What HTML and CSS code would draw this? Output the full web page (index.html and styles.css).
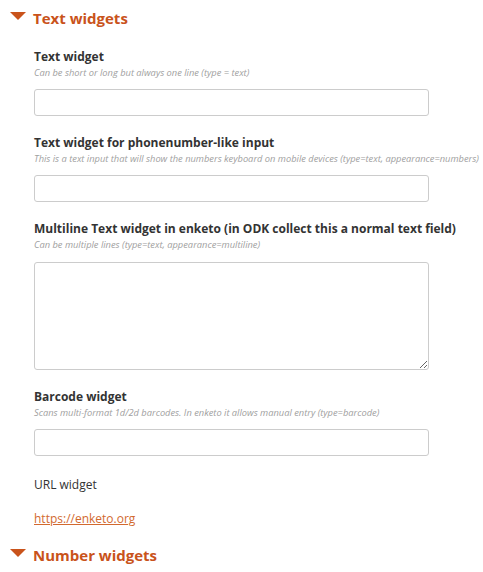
FILE: index.html
```html
<!DOCTYPE html>
<html lang="en">
<head>
<meta charset="utf-8">
<title>Widgets</title>
<link rel="stylesheet" href="styles.css">
</head>
<body>
<main class="form">
  <section class="group">
    <h4 class="group-title"><span class="caret"></span>Text widgets</h4>
    <label class="question">
      <span class="q-label">Text widget</span>
      <span class="hint">Can be short or long but always one line (type = text)</span>
      <input class="field" type="text">
    </label>
    <label class="question">
      <span class="q-label">Text widget for phonenumber-like input</span>
      <span class="hint">This is a text input that will show the numbers keyboard on mobile devices (type=text, appearance=numbers)</span>
      <input class="field" type="text">
    </label>
    <label class="question">
      <span class="q-label">Multiline Text widget in enketo (in ODK collect this a normal text field)</span>
      <span class="hint">Can be multiple lines (type=text, appearance=multiline)</span>
      <textarea class="field area"></textarea>
    </label>
    <label class="question">
      <span class="q-label">Barcode widget</span>
      <span class="hint">Scans multi-format 1d/2d barcodes. In enketo it allows manual entry (type=barcode)</span>
      <input class="field" type="text">
    </label>
    <div class="question note">
      <span class="note-label">URL widget</span>
      <a class="link" href="#">https://enketo.org</a>
    </div>
  </section>
  <section class="group">
    <h4 class="group-title"><span class="caret"></span>Number widgets</h4>
  </section>
</main>
</body>
</html>
```

FILE: styles.css
```css
html, body {
  margin: 0;
  padding: 0;
  background: #fff;
}
body {
  font-family: "Open Sans", "DejaVu Sans", sans-serif;
  color: #333;
}
.form {
  padding: 8px 0 0 0;
}
.group-title {
  margin: 0;
  display: flex;
  align-items: center;
  font-size: 15px;
  line-height: 20px;
  font-weight: 700;
  color: #c9531b;
}
.caret {
  width: 0;
  height: 0;
  margin: 0 7px 0 10px;
  border-left: 8.5px solid transparent;
  border-right: 8.5px solid transparent;
  border-top: 8px solid #c9531b;
  position: relative;
  top: -2px;
}
.question {
  display: flex;
  flex-direction: column;
  align-items: flex-start;
  padding-left: 34px;
  margin-top: 20px;
}
.question + .question {
  margin-top: 18px;
}
.q-label {
  font-size: 12px;
  line-height: 18px;
  font-weight: 700;
  color: #333;
  white-space: nowrap;
}
.hint {
  font-size: 9.3px;
  line-height: 13px;
  font-style: italic;
  color: #a0a0a0;
  white-space: nowrap;
}
.field {
  box-sizing: border-box;
  margin: 10px 0 0 0;
  width: 395px;
  height: 27px;
  border: 1px solid #ccc;
  border-radius: 3px;
  background: #fff;
  font-family: inherit;
  font-size: 12px;
  padding: 2px 6px;
}
.area {
  margin-top: 11px;
  height: 108px;
  resize: both;
}
.question.note {
  margin-top: 20px;
}
.note-label {
  font-size: 12px;
  line-height: 18px;
  color: #333;
}
.link {
  margin-top: 16px;
  font-size: 12px;
  line-height: 18px;
  color: #d2692f;
  text-decoration: underline;
}
.group + .group {
  margin-top: 17px;
}
```
